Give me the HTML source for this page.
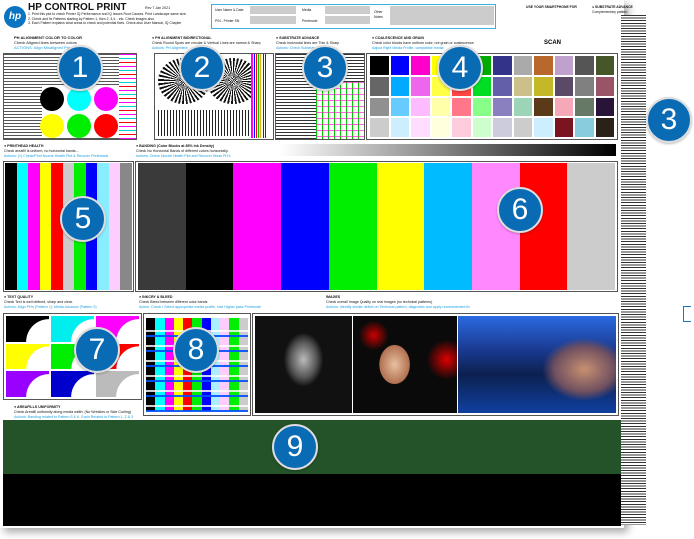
<!DOCTYPE html><html><head><style>
*{margin:0;padding:0;box-sizing:border-box}
body{width:694px;height:539px;background:#fff;position:relative;overflow:hidden;font-family:"Liberation Sans",sans-serif}
.a{position:absolute}
.page{left:0;top:0;width:624px;height:528px;background:#fff;box-shadow:4px 4px 8px rgba(0,0,0,.35)}
.bx{position:absolute;border:1.5px solid #555}
.badge{position:absolute;width:46px;height:46px;border-radius:50%;background:#0a6bb5;border:2px solid #ddd;color:#fff;font-size:30px;text-align:center;line-height:42px;box-shadow:0 1px 2px rgba(0,0,0,.25)}
.t{position:absolute;font-size:4px;line-height:5px;color:#111;white-space:nowrap}
.b{color:#1aa0e0}
.h{font-weight:bold}
.row{display:flex;height:100%}.row div{flex:1}
.c7{background:radial-gradient(circle at 100% 100%,#fff 45%,var(--c) 46%)}
</style></head><body>
<div class="a page"></div>
<div class="a" style="left:4px;top:6px;width:22px;height:22px;border-radius:50%;background:#0a74c0;color:#fff;font:italic bold 10px 'Liberation Sans';text-align:center;line-height:22px">hp</div>
<div class="a h" style="left:28px;top:2px;font-size:10px;color:#111">HP CONTROL PRINT</div>
<div class="t" style="left:145px;top:6px;font-size:3.6px">Rev 7 Jan 2021</div>
<div class="t" style="left:28px;top:12px;font-size:3.4px;line-height:4.6px">1. Print this plot to check Printer IQ Performance and IQ Issues Root Causes. Print Landscape same size.<br>2. Check and fix Patterns starting by Pattern 1, then 2, 3,4... etc. Check images also.<br>3. Each Pattern explains what areas to check and potential fixes. Check also User Manual, IQ Chapter</div>
<div class="a" style="left:211px;top:4px;width:285px;height:25px;border:1px solid #3ab0e0"></div>
<div class="t" style="left:215px;top:8px;font-size:3.4px">User Name &amp; Date</div><div class="a" style="left:250px;top:6px;width:46px;height:8px;background:#ccc"></div>
<div class="t" style="left:215px;top:19px;font-size:3.4px">P/N - Printer SN</div><div class="a" style="left:250px;top:16px;width:46px;height:8px;background:#ccc"></div>
<div class="t" style="left:302px;top:8px;font-size:3.4px">Media</div><div class="a" style="left:325px;top:6px;width:45px;height:8px;background:#ccc"></div>
<div class="t" style="left:302px;top:19px;font-size:3.4px">Printmode</div><div class="a" style="left:325px;top:16px;width:45px;height:8px;background:#ccc"></div>
<div class="t" style="left:374px;top:10px;font-size:3.4px">Other<br>Notes</div><div class="a" style="left:390px;top:6px;width:104px;height:19px;background:#ccc"></div>
<div class="t h" style="left:526px;top:5px;font-size:3.4px">USE YOUR SMARTPHONE FOR</div>
<div class="t h" style="left:592px;top:5px;font-size:3.4px">● SUBSTRATE ADVANCE<br><span style="font-weight:normal">Complementary pattern</span></div>
<div class="a" style="left:621px;top:15px;width:25px;height:510px;background:repeating-linear-gradient(#333 0 1px,#fff 1px 2.6px)"></div>
<div class="t" style="left:14px;top:35px"><span class="h">PH ALIGNMENT COLOR TO COLOR</span><br>Check Aligned lines between colors<br><span class="b">ACTIONS: Align Misaligned Printheads</span></div>
<div class="t" style="left:152px;top:36px;font-size:3.6px"><span class="h">● PH ALIGNMENT BIDIRECTIONAL</span><br>Check Round Spots are circular &amp; Vertical Lines are narrow &amp; Sharp<br><span class="b">Actions: PH Alignment</span></div>
<div class="t" style="left:276px;top:36px;font-size:3.6px"><span class="h">● SUBSTRATE ADVANCE</span><br>Check horizontal lines are Thin &amp; Sharp<br><span class="b">Actions: Check Substrate Advance</span></div>
<div class="t" style="left:372px;top:36px;font-size:3.6px"><span class="h">● COALESCENCE AND GRAIN</span><br>Check color blocks have uniform color, not grain or coalescence.<br><span class="b">Adjust Right Media Profile, compatible media</span></div>
<div class="a h" style="left:544px;top:40px;font-size:6px">SCAN</div>
<div class="bx" style="left:3px;top:53px;width:134px;height:87px;background:repeating-linear-gradient(#555 0 1px,#fff 1px 3px)">
 <div class="a" style="left:38px;top:33px;width:80px;height:50px;background:#fff"></div>
 <div class="a" style="left:115px;top:0;width:17px;height:85px;background:repeating-linear-gradient(#f0f 0 1px,#fff 1px 4px,#0cc 4px 5px,#fff 5px 8px,#f00 8px 9px,#fff 9px 12px)"></div>
</div>
<div class="a" style="left:40px;top:87px;width:24px;height:24px;border-radius:50%;background:#000"></div>
<div class="a" style="left:67px;top:87px;width:24px;height:24px;border-radius:50%;background:#0ff"></div>
<div class="a" style="left:94px;top:87px;width:24px;height:24px;border-radius:50%;background:#f0f"></div>
<div class="a" style="left:40px;top:114px;width:24px;height:24px;border-radius:50%;background:#ff0"></div>
<div class="a" style="left:67px;top:114px;width:24px;height:24px;border-radius:50%;background:#0e0"></div>
<div class="a" style="left:94px;top:114px;width:24px;height:24px;border-radius:50%;background:#f00"></div>
<div class="bx" style="left:154px;top:53px;width:120px;height:87px">
 <div class="a" style="left:3px;top:4px;width:52px;height:46px;border-radius:50%;background:repeating-conic-gradient(#111 0 5deg,#fff 5deg 10deg)"></div>
 <div class="a" style="left:52px;top:4px;width:52px;height:46px;border-radius:50%;background:repeating-conic-gradient(#111 0 5deg,#fff 5deg 10deg)"></div>
 <div class="a" style="left:3px;top:56px;width:92px;height:26px;background:repeating-linear-gradient(90deg,#222 0 1px,#fff 1px 3px)"></div>
 <div class="a" style="left:96px;top:0;width:20px;height:84px;background:linear-gradient(90deg,#f0f 0 2px,#fff 2px 3px,#00f 3px 4px,#fff 4px 5px,#f00 5px 6px,#fff 6px 7px,#0c0 7px 8px,#fff 8px 9px,#fa0 9px 10px,#fff 10px 12px,#333 12px 13px,#fff 13px 14px,#333 14px 15px,#fff 15px)"></div>
</div>
<div class="bx" style="left:275px;top:53px;width:90px;height:87px;background:repeating-linear-gradient(#333 0 1px,#fff 1px 3px)">
 <div class="a" style="left:40px;top:28px;width:48px;height:57px;background:repeating-linear-gradient(90deg,#0c0 0 1px,#fff 1px 6px),#fff"></div>
 <div class="a" style="left:40px;top:28px;width:48px;height:57px;background:repeating-linear-gradient(rgba(255,0,200,.6) 0 1px,transparent 1px 6px)"></div>
</div>
<div class="bx" style="left:366px;top:53px;width:252px;height:87px;background:#fff;padding:2px 3px">
<div style="display:grid;grid-template-columns:repeat(12,1fr);grid-template-rows:repeat(4,1fr);gap:2px;height:100%">
<div style="background:#000"></div><div style="background:#00f"></div><div style="background:#f0c"></div><div style="background:#ff0"></div><div style="background:#f00"></div><div style="background:#0a0"></div><div style="background:#33338a"></div><div style="background:#aaa"></div><div style="background:#b8682a"></div><div style="background:#c0a0cc"></div><div style="background:#555"></div><div style="background:#465628"></div>
<div style="background:#666"></div><div style="background:#0af"></div><div style="background:#e6e"></div><div style="background:#ff4"></div><div style="background:#f44"></div><div style="background:#0d2"></div><div style="background:#6260a8"></div><div style="background:#ccc08a"></div><div style="background:#c4b828"></div><div style="background:#5a4a66"></div><div style="background:#808080"></div><div style="background:#9a5468"></div>
<div style="background:#909090"></div><div style="background:#6cf"></div><div style="background:#fbf"></div><div style="background:#ffa"></div><div style="background:#f78"></div><div style="background:#8f8"></div><div style="background:#8a80c0"></div><div style="background:#9cd4b8"></div><div style="background:#5a3a18"></div><div style="background:#f4a8b8"></div><div style="background:#667866"></div><div style="background:#281436"></div>
<div style="background:#ccc"></div><div style="background:#cef"></div><div style="background:#fdf"></div><div style="background:#ffd"></div><div style="background:#fcd"></div><div style="background:#cfc"></div><div style="background:#ccd"></div><div style="background:#ccc"></div><div style="background:#cef"></div><div style="background:#7a1420"></div><div style="background:#8cd"></div><div style="background:#2a2218"></div>
</div></div>
<div class="t" style="left:4px;top:144px;font-size:3.6px"><span class="h">● PRINTHEAD HEALTH</span><br>Check areafill is uniform, no horizontal bands...<br><span class="b">Actions: (1) Check/Print Nozzle Health Plot &amp; Recover Printheads</span></div>
<div class="t" style="left:136px;top:144px;font-size:3.6px"><span class="h">● BANDING (Color Blocks at 85% Ink Density)</span><br>Check No Horizontal Bands of different colors horizontally.<br><span class="b">Actions: Check Nozzle Health Plot and Recover Weak PH's</span></div>
<div class="a" style="left:280px;top:144px;width:336px;height:12px;background:linear-gradient(90deg,#fff,#ccc 20%,#000)"></div>
<div class="bx" style="left:3px;top:161px;width:131px;height:131px;padding:1px">
<div class="row"><div style="background:#000"></div><div style="background:#0ff"></div><div style="background:#f0f"></div><div style="background:#ff0"></div><div style="background:#f00"></div><div style="background:#ccc"></div><div style="background:#0e0"></div><div style="background:#00f"></div><div style="background:#8ef"></div><div style="background:#fcf"></div><div style="background:#888"></div></div></div>
<div class="bx" style="left:135px;top:161px;width:483px;height:131px;padding:1px 2px">
<div class="row"><div style="background:#3a3a3a"></div><div style="background:#000"></div><div style="background:#f0f"></div><div style="background:#00f"></div><div style="background:#0e0"></div><div style="background:#ff0"></div><div style="background:#0bf"></div><div style="background:#f8f"></div><div style="background:#f00"></div><div style="background:#ccc"></div></div></div>
<div class="t" style="left:4px;top:295px;font-size:3.6px"><span class="h">● TEXT QUALITY</span><br>Check Text is well defined, sharp and clear.<br><span class="b">Actions: Align PH's (Pattern 1), Media Advance (Pattern 3)</span></div>
<div class="t" style="left:139px;top:295px;font-size:3.6px"><span class="h">● INKCRY &amp; BLEED</span><br>Check Bleed between different color bands<br><span class="b">Action: Check / Select appropriate media profile, Use Higher pass Printmode</span></div>
<div class="t" style="left:326px;top:295px;font-size:3.6px"><span class="h">IMAGES</span><br>Check overall Image Quality on real Images (no technical patterns)<br><span class="b">Actions: Identify similar defect on Technical pattern, diagnostic and apply recommended fix</span></div>
<div class="bx" style="left:3px;top:313px;width:139px;height:87px;padding:2px;display:grid;grid-template-columns:repeat(3,1fr);grid-template-rows:repeat(3,1fr);gap:2px">
<div class="c7" style="--c:#000"></div><div class="c7" style="--c:#0ee"></div><div class="c7" style="--c:#f0f"></div>
<div class="c7" style="--c:#ff0"></div><div class="c7" style="--c:#0e0"></div><div class="c7" style="--c:#f00"></div>
<div class="c7" style="--c:#90f"></div><div class="c7" style="--c:#00c"></div><div class="c7" style="--c:#bbb"></div>
</div>
<div class="t" style="left:14px;top:405px;font-size:3.6px"><span class="h">● AREAFILLS UNIFORMITY</span><br>Check Areafill uniformity along media width. (No Wrinkles or Side Curling)<br><span class="b">Actions: Banding related to Pattern 5 &amp; 6. Grain Related to Pattern 1, 2 &amp; 3</span></div>
<div class="bx" style="left:143px;top:313px;width:108px;height:103px;padding:4px 2px">
<div class="row" style="height:100%"><div style="background:#000"></div><div style="background:#0ff"></div><div style="background:#f0f"></div><div style="background:#ff0"></div><div style="background:#f00"></div><div style="background:#0e0"></div><div style="background:#00f"></div><div style="background:#aef"></div><div style="background:#fcf"></div><div style="background:#0e0"></div><div style="background:#ccc"></div></div>
<div class="a" style="left:2px;top:8px;width:102px;height:90px;background:repeating-linear-gradient(transparent 0 8px,rgba(255,255,255,.8) 8px 10px,transparent 10px 13px,rgba(0,80,255,.9) 13px 15px)"></div>
</div>
<div class="bx" style="left:252px;top:313px;width:367px;height:103px;padding:2px;display:flex;gap:1px">
<div style="width:97px;background:radial-gradient(ellipse 22px 30px at 50% 45%,#bbb,#555 60%,#111 90%),#222"></div>
<div style="width:104px;background:radial-gradient(ellipse 25px 32px at 40% 50%,#e8c0a0,#b07050 60%,transparent 62%),radial-gradient(circle 20px at 90% 45%,#d00,transparent),radial-gradient(circle 15px at 20% 20%,#c00,transparent),#0a0a0a"></div>
<div style="flex:1;background:radial-gradient(ellipse 60px 45px at 80% 55%,#c89070,#705060 50%,transparent 70%),linear-gradient(#2a6ae0,#1a3a90 35%,#0c2050 60%,#1040a0)"></div>
</div>
<div class="a" style="left:3px;top:420px;width:618px;height:54px;background:#245229"></div>
<div class="a" style="left:3px;top:474px;width:618px;height:52px;background:#000"></div>
<div class="a" style="left:683px;top:306px;width:8px;height:16px;border:1px solid #1a7ac8;border-right:none"></div>
<div class="badge" style="left:57px;top:45px">1</div>
<div class="badge" style="left:179px;top:45px">2</div>
<div class="badge" style="left:302px;top:45px">3</div>
<div class="badge" style="left:437px;top:45px">4</div>
<div class="badge" style="left:60px;top:196px">5</div>
<div class="badge" style="left:497px;top:187px">6</div>
<div class="badge" style="left:74px;top:327px">7</div>
<div class="badge" style="left:173px;top:327px">8</div>
<div class="badge" style="left:272px;top:424px">9</div>
<div class="badge" style="left:646px;top:97px">3</div>
</body></html>
